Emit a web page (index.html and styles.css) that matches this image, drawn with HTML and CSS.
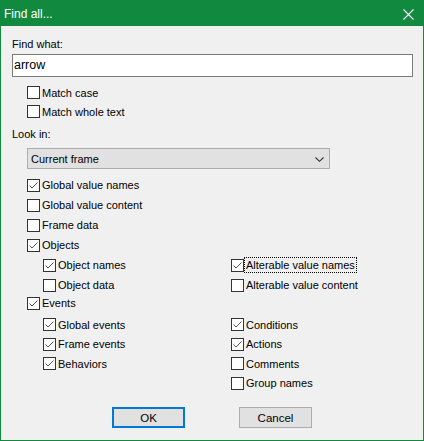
FILE: index.html
```html
<!DOCTYPE html>
<html>
<head>
<meta charset="utf-8">
<link rel="stylesheet" href="styles.css">
</head>
<body>
<div class="window">
  <div class="titlebar">
    <span class="title">Find all...</span>
    <svg class="close" width="11" height="11" viewBox="0 0 11 11"><path d="M0.5 0.5 L10.5 10.5 M10.5 0.5 L0.5 10.5" stroke="#fff" stroke-width="1.1" fill="none"/></svg>
  </div>
  <div class="content">
    <div class="label find-label">Find what:</div>
    <div class="input">arrow</div>
    <div class="match">
      <div class="cb row19"><span class="box"></span><span class="text">Match case</span></div>
      <div class="cb row19"><span class="box"></span><span class="text">Match whole text</span></div>
    </div>
    <div class="label look-label">Look in:</div>
    <div class="combo">
      <span>Current frame</span>
      <svg class="chev" width="9" height="5" viewBox="0 0 9 5"><path d="M0.5 0.5 L4.5 4.3 L8.5 0.5" stroke="#333" stroke-width="1.1" fill="none"/></svg>
    </div>
    <div class="list">
      <div class="cb"><span class="box on"><svg viewBox="0 0 11 11"><path d="M1.5 5.5 L4 8 L9.5 2.5" stroke="#555" stroke-width="1" fill="none"/></svg></span><span class="text">Global value names</span></div>
      <div class="cb"><span class="box"></span><span class="text">Global value content</span></div>
      <div class="cb"><span class="box"></span><span class="text">Frame data</span></div>
      <div class="cb"><span class="box on"><svg viewBox="0 0 11 11"><path d="M1.5 5.5 L4 8 L9.5 2.5" stroke="#555" stroke-width="1" fill="none"/></svg></span><span class="text">Objects</span></div>
      <div class="sub">
        <div class="cb"><span class="box on"><svg viewBox="0 0 11 11"><path d="M1.5 5.5 L4 8 L9.5 2.5" stroke="#555" stroke-width="1" fill="none"/></svg></span><span class="text">Object names</span></div>
        <div class="cb"><span class="box on"><svg viewBox="0 0 11 11"><path d="M1.5 5.5 L4 8 L9.5 2.5" stroke="#555" stroke-width="1" fill="none"/></svg></span><span class="text focus">Alterable value names</span></div>
        <div class="cb"><span class="box"></span><span class="text">Object data</span></div>
        <div class="cb"><span class="box"></span><span class="text">Alterable value content</span></div>
      </div>
      <div class="cb events-row"><span class="box on"><svg viewBox="0 0 11 11"><path d="M1.5 5.5 L4 8 L9.5 2.5" stroke="#555" stroke-width="1" fill="none"/></svg></span><span class="text">Events</span></div>
      <div class="sub events">
        <div class="cb"><span class="box on"><svg viewBox="0 0 11 11"><path d="M1.5 5.5 L4 8 L9.5 2.5" stroke="#555" stroke-width="1" fill="none"/></svg></span><span class="text">Global events</span></div>
        <div class="cb"><span class="box on"><svg viewBox="0 0 11 11"><path d="M1.5 5.5 L4 8 L9.5 2.5" stroke="#555" stroke-width="1" fill="none"/></svg></span><span class="text">Conditions</span></div>
        <div class="cb"><span class="box on"><svg viewBox="0 0 11 11"><path d="M1.5 5.5 L4 8 L9.5 2.5" stroke="#555" stroke-width="1" fill="none"/></svg></span><span class="text">Frame events</span></div>
        <div class="cb"><span class="box on"><svg viewBox="0 0 11 11"><path d="M1.5 5.5 L4 8 L9.5 2.5" stroke="#555" stroke-width="1" fill="none"/></svg></span><span class="text">Actions</span></div>
        <div class="cb"><span class="box on"><svg viewBox="0 0 11 11"><path d="M1.5 5.5 L4 8 L9.5 2.5" stroke="#555" stroke-width="1" fill="none"/></svg></span><span class="text">Behaviors</span></div>
        <div class="cb"><span class="box"></span><span class="text">Comments</span></div>
        <div class="cb empty"></div>
        <div class="cb"><span class="box"></span><span class="text">Group names</span></div>
      </div>
    </div>
    <div class="buttons">
      <div class="btn default">OK</div>
      <div class="btn">Cancel</div>
    </div>
  </div>
</div>
</body>
</html>
```

FILE: styles.css
```css
* { box-sizing: border-box; }
html, body { margin: 0; padding: 0; }
body {
  width: 424px;
  height: 441px;
  font-family: "Liberation Sans", Arial, sans-serif;
  font-size: 11px;
  color: #000;
  background: #f0f0f0;
}
.window {
  width: 424px;
  height: 441px;
  border: 1px solid #118a3f;
  background: #f0f0f0;
  display: flex;
  flex-direction: column;
}
.titlebar {
  height: 25px;
  background: #118a3f;
  display: flex;
  align-items: center;
  justify-content: space-between;
  padding: 0 9px 0 3px;
  flex-shrink: 0;
}
.title {
  color: #fff;
  font-size: 12px;
}
.close { display: block; margin-top: 1px; }
.content {
  padding-left: 11px;
  display: flex;
  flex-direction: column;
}
.label {
  height: 14px;
  line-height: 14px;
}
.find-label { margin-top: 11px; }
.input {
  margin-top: 3px;
  width: 401px;
  height: 23px;
  border: 1px solid #7a7a7a;
  background: #fff;
  padding-left: 1px;
  line-height: 20px;
  font-size: 12.5px;
}
.match {
  margin-top: 6px;
  margin-left: 15px;
}
.look-label { margin-top: 6px; }
.combo {
  margin-top: 7px;
  margin-left: 15px;
  width: 303px;
  height: 21px;
  border: 1px solid #adadad;
  background: #e1e1e1;
  display: flex;
  align-items: center;
  justify-content: space-between;
  padding: 0 5px 0 3px;
}
.chev { display: block; margin-top: 1px; }
.list {
  margin-top: 6px;
  margin-left: 15px;
}
.cb {
  height: 20px;
  display: flex;
  align-items: center;
}
.cb.row19 { height: 19px; }
.cb.events-row { margin-top: -2px; }
.box {
  width: 13px;
  height: 13px;
  border: 1px solid #333;
  background: #fff;
  margin-right: 2px;
  flex-shrink: 0;
  display: flex;
}
.box svg { width: 11px; height: 11px; display: block; }
.text {
  line-height: 14px;
  white-space: nowrap;
}
.text.focus {
  outline: 1px dotted #000;
  outline-offset: 0;
  padding: 0 1px;
  margin-left: -1px;
}
.sub {
  margin-left: 16px;
  display: grid;
  grid-template-columns: 188px 1fr;
}
.sub.events {
  margin-top: 2px;
  grid-auto-rows: 19.5px;
}
.sub.events .cb { height: 19.5px; }
.buttons {
  margin-top: 14px;
  display: flex;
  justify-content: center;
  gap: 54px;
  padding-right: 11px;
}
.btn {
  width: 73px;
  height: 21px;
  border: 1px solid #adadad;
  background: #e1e1e1;
  display: flex;
  align-items: center;
  justify-content: center;
  font-size: 11.5px;
}
.btn.default {
  border: 2px solid #0078d7;
}
```
